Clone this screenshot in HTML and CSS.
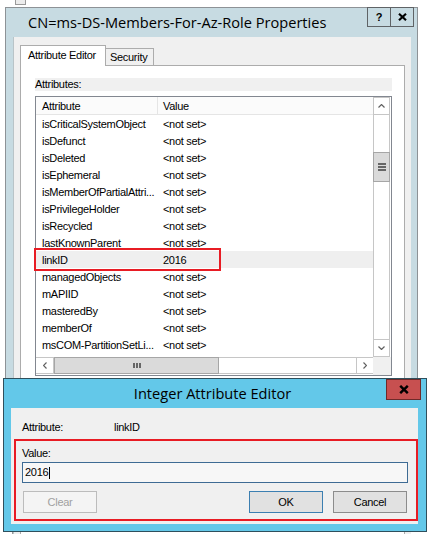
FILE: index.html
```html
<!DOCTYPE html>
<html>
<head>
<meta charset="utf-8">
<link rel="stylesheet" href="styles.css">
</head>
<body>
<div class="deskicon top"></div>
<div class="deskicon bottom"></div>

<div class="win props">
  <div class="titlebar">
    <span class="title">CN=ms-DS-Members-For-Az-Role Properties</span>
    <div class="capbtns">
      <div class="capbtn">?</div>
      <div class="capbtn">
        <svg width="9" height="8" viewBox="0 0 9 8"><path d="M1 0.8 L8 7.2 M8 0.8 L1 7.2" stroke="#000" stroke-width="2.2" fill="none"/></svg>
      </div>
    </div>
  </div>
  <div class="client">
    <div class="tabs">
      <div class="tab active">Attribute Editor</div>
      <div class="tab second">Security</div>
    </div>
    <div class="tabpage">
      <div class="label">Attributes:</div>
      <div class="listbox">
        <div class="lv">
          <div class="lvhead"><div class="c1">Attribute</div><div class="c2">Value</div></div>
          <div class="row"><div class="c1">isCriticalSystemObject</div><div class="c2">&lt;not set&gt;</div></div>
          <div class="row"><div class="c1">isDefunct</div><div class="c2">&lt;not set&gt;</div></div>
          <div class="row"><div class="c1">isDeleted</div><div class="c2">&lt;not set&gt;</div></div>
          <div class="row"><div class="c1">isEphemeral</div><div class="c2">&lt;not set&gt;</div></div>
          <div class="row"><div class="c1">isMemberOfPartialAttri...</div><div class="c2">&lt;not set&gt;</div></div>
          <div class="row"><div class="c1">isPrivilegeHolder</div><div class="c2">&lt;not set&gt;</div></div>
          <div class="row"><div class="c1">isRecycled</div><div class="c2">&lt;not set&gt;</div></div>
          <div class="row"><div class="c1">lastKnownParent</div><div class="c2">&lt;not set&gt;</div></div>
          <div class="row hl"><div class="c1">linkID</div><div class="c2">2016</div></div>
          <div class="row"><div class="c1">managedObjects</div><div class="c2">&lt;not set&gt;</div></div>
          <div class="row"><div class="c1">mAPIID</div><div class="c2">&lt;not set&gt;</div></div>
          <div class="row"><div class="c1">masteredBy</div><div class="c2">&lt;not set&gt;</div></div>
          <div class="row"><div class="c1">memberOf</div><div class="c2">&lt;not set&gt;</div></div>
          <div class="row"><div class="c1">msCOM-PartitionSetLi...</div><div class="c2">&lt;not set&gt;</div></div>
        </div>
        <div class="vscroll">
          <div class="sbtn vbtn up"><svg width="7" height="4" viewBox="0 0 7 4"><polyline points="0.5,3.5 3.5,0.5 6.5,3.5" fill="none" stroke="#606060" stroke-width="1.2"/></svg></div>
          <div class="vtrack">
            <div class="vthumb"><svg width="8" height="8" viewBox="0 0 8 8"><rect x="0" y="0" width="8" height="2" fill="#666"/><rect x="0" y="3" width="8" height="2" fill="#666"/><rect x="0" y="6" width="8" height="2" fill="#666"/></svg></div>
          </div>
          <div class="sbtn vbtn down"><svg width="7" height="4" viewBox="0 0 7 4"><polyline points="0.5,0.5 3.5,3.5 6.5,0.5" fill="none" stroke="#606060" stroke-width="1.2"/></svg></div>
        </div>
        <div class="hscroll">
          <div class="sbtn hbtn left"><svg width="4" height="7" viewBox="0 0 4 7"><polyline points="3.5,0.5 0.5,3.5 3.5,6.5" fill="none" stroke="#606060" stroke-width="1.2"/></svg></div>
          <div class="hthumb"><svg width="8" height="5" viewBox="0 0 8 5"><rect x="0" y="0" width="2" height="5" fill="#666"/><rect x="3" y="0" width="2" height="5" fill="#666"/><rect x="6" y="0" width="2" height="5" fill="#666"/></svg></div>
          <div class="htrack"></div>
          <div class="sbtn hbtn right"><svg width="4" height="7" viewBox="0 0 4 7"><polyline points="0.5,0.5 3.5,3.5 0.5,6.5" fill="none" stroke="#606060" stroke-width="1.2"/></svg></div>
        </div>
        <div class="corner"></div>
      </div>
    </div>
  </div>
</div>

<div class="mark mark1"></div>

<div class="win dlg">
  <div class="dtitlebar">
    <span></span>
    <span class="title">Integer Attribute Editor</span>
    <div class="closewrap">
      <div class="closebtn"><svg width="10" height="9" viewBox="0 0 10 9"><path d="M1.2 0.8 L8.8 8.2 M8.8 0.8 L1.2 8.2" stroke="#000" stroke-width="2.4" fill="none"/></svg></div>
    </div>
  </div>
  <div class="dclient">
    <div class="attrrow"><span class="alabel">Attribute:</span><span>linkID</span></div>
    <div class="vlabel">Value:</div>
    <div class="textbox">2016<span class="caret"></span></div>
    <div class="btnrow">
      <div class="btn disabled">Clear</div>
      <div class="btn ok">OK</div>
      <div class="btn cancel">Cancel</div>
    </div>
  </div>
</div>

<div class="mark mark2"></div>
</body>
</html>
```

FILE: styles.css
```css
* { box-sizing: border-box; }
html, body { margin: 0; padding: 0; }
body {
  width: 448px;
  height: 534px;
  overflow: hidden;
  position: relative;
  background: #fff;
  font-family: "Liberation Sans", Arial, sans-serif;
  font-size: 11px;
  letter-spacing: -0.3px;
  color: #000;
}

.deskicon { position: absolute; border: 1px solid #9a9a9a; background: #ececec; }
.deskicon.top { left: 15px; top: -2px; width: 11px; height: 7px; }
.deskicon.bottom { left: 12px; top: 531px; width: 14px; height: 6px; }

.win { position: absolute; display: flex; flex-direction: column; }

/* Properties window */
.props {
  left: 5px; top: 7px;
  width: 413px; height: 522px;
  border: 1px solid #8d9296;
  background: #c7dbe2;
}
.titlebar {
  height: 29px;
  flex: none;
  display: flex;
  align-items: flex-start;
  padding-left: 22px;
  padding-right: 3px;
}
.title {
  font-family: "Open Sans", "Noto Sans", sans-serif;
  font-size: 14.6px;
  letter-spacing: 0;
  line-height: 29px;
  color: #000;
  white-space: nowrap;
}
.capbtns {
  margin-left: auto;
  margin-top: -1px;
  display: flex;
  border: 1px solid #5f6366;
}
.capbtn {
  width: 22px; height: 18px;
  display: flex; align-items: center; justify-content: center;
  font-weight: bold; font-size: 11px; letter-spacing: 0;
}
.capbtn + .capbtn { width: 23px; border-left: 1px solid #5f6366; }

.client {
  flex: 1;
  margin: 0 6px 0 7px;
  background: #f0f0f0;
  padding: 8px 6px 0 6px;
  border-left: 1px solid #b9c4c8;
}
.tabs { display: flex; align-items: flex-end; height: 20px; }
.tab {
  height: 17px;
  line-height: 16px;
  border: 1px solid #acacac;
  border-bottom: none;
  background: #f0f0f0;
  padding: 0 0 0 4px;
  white-space: nowrap;
}
.tab.active {
  width: 86px;
  height: 21px;
  line-height: 18px;
  margin-bottom: -1px;
  padding-left: 7px;
  background: #fff;
  position: relative;
  z-index: 1;
}
.tab.second { width: 49px; margin-left: -1px; }

.tabpage {
  background: #fff;
  border: 1px solid #acacac;
  height: 480px;
  padding: 12px 13px 0 14px;
}
.label {
  width: 357px;
  height: 13px;
  line-height: 13px;
  background: #f0f0f0;
}
.listbox {
  margin-top: 5px;
  width: 357px;
  height: 280px;
  border: 1px solid #828790;
  background: #fff;
  padding: 0 1px 1px 0;
  display: grid;
  grid-template-columns: 337px 17px;
  grid-template-rows: 260px 17px;
}
.lv { overflow: hidden; }
.lvhead {
  display: flex;
  height: 18px;
  line-height: 19px;
  background: #fbfbfb;
  border-bottom: 1px solid #e5e5e5;
}
.lvhead .c1 { border-right: 1px solid #e5e5e5; }
.c1 { width: 122px; padding-left: 6px; white-space: nowrap; overflow: hidden; }
.c2 { padding-left: 5px; white-space: nowrap; }
.row { display: flex; height: 17px; line-height: 18px; }
.row.hl { background: #efefef; }

.sbtn { display: flex; align-items: center; justify-content: center; }
.vscroll {
  border-left: 1px solid #c6c6c6;
  border-right: 1px solid #c6c6c6;
  display: flex;
  flex-direction: column;
}
.vbtn { height: 18px; flex: none; }
.vbtn.up { border-top: 1px solid #c6c6c6; border-bottom: 1px solid #c6c6c6; }
.vbtn.down { border-top: 1px solid #c6c6c6; border-bottom: 1px solid #c6c6c6; height: 18px; }
.vtrack { flex: 1; }
.vthumb {
  margin: 37px -1px 0;
  height: 30px;
  background: #dadada;
  border: 1px solid #a6a6a6;
  display: flex; align-items: center; justify-content: center;
}
.hscroll {
  border-top: 1px solid #c6c6c6;
  border-bottom: 1px solid #c6c6c6;
  display: flex;
}
.hbtn { width: 18px; flex: none; }
.hbtn.left { border-right: 1px solid #c6c6c6; }
.hbtn.right { width: 17px; border-left: 1px solid #c6c6c6; }
.hthumb {
  width: 165px;
  margin: -1px 0;
  background: #dadada;
  border: 1px solid #a6a6a6;
  display: flex; align-items: center; justify-content: center;
}
.htrack { flex: 1; }
.corner { background: #f0f0f0; margin: 0 -1px -1px 0; }

/* Annotations */
.mark { position: absolute; border: 2px solid #e81c24; }
.mark1 { left: 34px; top: 248px; width: 187px; height: 23px; }
.mark2 { left: 14px; top: 439px; width: 404px; height: 82px; }

/* Dialog */
.dlg {
  left: 3px; top: 378px;
  width: 424px; height: 154px;
  border: 1px solid #2f4f5c;
  background: #63c8e9;
}
.dtitlebar {
  height: 29px;
  flex: none;
  display: grid;
  grid-template-columns: 1fr auto 1fr;
  padding-right: 5px;
}
.dtitlebar .title { text-align: center; }
.closewrap { display: flex; justify-content: flex-end; }
.closebtn {
  width: 35px; height: 21px;
  background: #c75050;
  border: 1px solid #6e2a2a;
  display: flex; align-items: center; justify-content: center;
}
.dclient {
  height: 116px;
  flex: none;
  margin: 0 8px 0 7px;
  background: #f0f0f0;
  padding: 12px 10px 0 11px;
}
.attrrow { display: flex; height: 14px; line-height: 14px; }
.alabel { width: 92px; }
.vlabel { margin-top: 12px; height: 14px; line-height: 14px; }
.textbox {
  margin-top: 2px;
  height: 21px;
  border: 1px solid #3e6b94;
  background: #f7f7f7;
  padding-left: 2px;
  line-height: 19px;
  display: flex;
  align-items: center;
}
.caret { display: inline-block; width: 1px; height: 12px; background: #000; margin-left: 1px; }
.btnrow { margin-top: 8px; display: flex; padding-right: 1px; }
.btn {
  width: 74px; height: 22px;
  border: 1px solid #8c8c8c;
  background: #e1e1e1;
  line-height: 20px;
  text-align: center;
}
.btn.disabled {
  margin-left: 1px;
  margin-right: auto;
  background: #f4f4f4;
  border-color: #bcbcbc;
  color: #a0a0a0;
}
.btn.ok { border-color: #3c7fb1; }
.btn.cancel { margin-left: 10px; }
```
